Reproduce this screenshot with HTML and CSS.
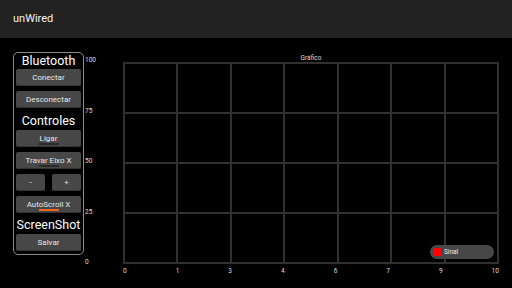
FILE: index.html
```html
<!DOCTYPE html>
<html lang="pt">
<head>
    <meta charset="UTF-8">
    <meta name="viewport" content="width=device-width, initial-scale=1.0">
    <title>unWired</title>
    <link rel="stylesheet" href="styles.css">
</head>
<body>
    <div class="topbar">unWired</div>

    <div class="main">
      <div class="panel">
        <div class="heading h-top">Bluetooth</div>
        <button class="btn">Conectar</button>
        <button class="btn tight">Desconectar</button>
        <div class="heading h-mid">Controles</div>
        <button class="btn toggle">Ligar</button>
        <button class="btn toggle">Travar Eixo X</button>
        <div class="pair">
          <button class="btn tight">-</button>
          <button class="btn tight">+</button>
        </div>
        <button class="btn toggle on tight">AutoScroll X</button>
        <div class="heading h-last">ScreenShot</div>
        <button class="btn tight">Salvar</button>
      </div>

      <div class="yaxis">
        <span>100</span>
        <span>75</span>
        <span>50</span>
        <span>25</span>
        <span>0</span>
      </div>

      <div class="chart">
        <div class="chart-title">Gráfico</div>
        <div class="plot">
          <div></div><div></div><div></div><div></div><div></div><div></div><div></div>
          <div></div><div></div><div></div><div></div><div></div><div></div><div></div>
          <div></div><div></div><div></div><div></div><div></div><div></div><div></div>
          <div></div><div></div><div></div><div></div><div></div><div></div><div></div>
          <div class="legend"><i class="swatch"></i>Sinal</div>
        </div>
        <div class="xaxis">
          <span>0</span><span>1</span><span>3</span><span>4</span>
          <span>6</span><span>7</span><span>9</span><span>10</span>
        </div>
      </div>
    </div>
</body>
</html>
```

FILE: styles.css
```css
body{
    margin:0;
    background:#000;
    color:#fff;
    font-family:Roboto, "Noto Sans", sans-serif;
    width:512px;
    height:288px;
    overflow:hidden;
}
.topbar{
    height:38px;
    line-height:38px;
    background:#222;
    padding-left:13px;
    font-size:11px;
    color:#f2f2f2;
}
.main{
    display:flex;
    padding:14px 0 0 13px;
}

/* side panel */
.panel{
    width:71px;
    height:203px;
    box-sizing:border-box;
    border:1px solid #8a8a8a;
    border-radius:5px;
    padding:0 2px 3px 2px;
    display:flex;
    flex-direction:column;
}
.heading{
    flex:none;
    font-size:12.5px;
    text-align:center;
    color:#fff;
}
.h-top{
    line-height:15px;
    padding-bottom:1px;
}
.h-mid{
    line-height:19px;
    padding-top:3px;
}
.h-last{
    line-height:19px;
    padding-top:2px;
}
.btn{
    position:relative;
    flex:none;
    height:17px;
    width:100%;
    margin:0 0 5px 0;
    padding:0;
    border:none;
    border-radius:2px;
    background:#474747;
    box-shadow:inset 0 -1px 0 #333;
    color:#e6e6e6;
    font-family:Roboto, "Noto Sans", sans-serif;
    font-size:8px;
}
.btn.tight{
    margin-bottom:0;
}
.toggle::after{
    content:"";
    position:absolute;
    left:50%;
    bottom:2px;
    width:20px;
    height:2px;
    margin-left:-10px;
    background:#2a2a2a;
}
.toggle.on::after{
    background:#f0661e;
}
.pair{
    flex:none;
    display:flex;
    gap:7px;
    margin-bottom:5px;
}
.pair .btn{
    flex:1;
}

/* axes */
.yaxis{
    margin:4px 0 0 1px;
    height:210px;
    width:12px;
    display:flex;
    flex-direction:column;
    justify-content:space-between;
    font-size:6.5px;
    line-height:8px;
    color:#ddd;
}
.chart{
    margin-left:26px;
    padding-top:3px;
    width:376px;
}
.chart-title{
    font-size:6.5px;
    line-height:7px;
    text-align:center;
    color:#ddd;
}
.plot{
    position:relative;
    height:202px;
    box-sizing:border-box;
    display:grid;
    grid-template-columns:repeat(7,1fr);
    grid-template-rows:repeat(4,1fr);
    gap:2px;
    padding:2px;
    background:#303030;
}
.plot div{
    background:#000;
}
.plot .legend{
    position:absolute;
    right:5px;
    bottom:5px;
    width:64px;
    height:14px;
    box-sizing:border-box;
    border-radius:7px;
    background:#474747;
    display:flex;
    align-items:center;
    padding-left:3px;
    font-size:6.5px;
    color:#eee;
}
.swatch{
    width:8px;
    height:8px;
    background:#f00;
    margin-right:3px;
}
.xaxis{
    margin-top:3px;
    display:flex;
    justify-content:space-between;
    font-size:6.5px;
    line-height:8px;
    color:#ddd;
}
```
